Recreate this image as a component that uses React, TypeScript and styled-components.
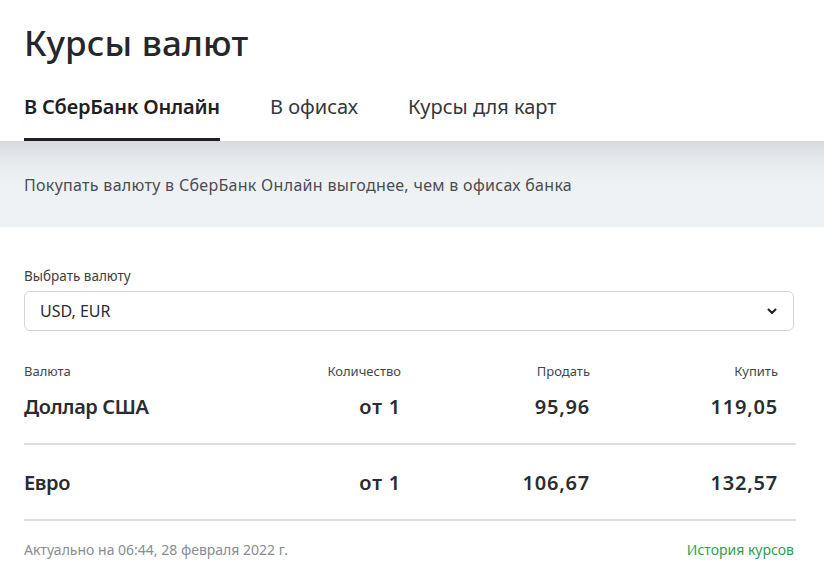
import React from 'react'
import styled, { createGlobalStyle } from 'styled-components'

const GlobalStyle = createGlobalStyle`
    html, body {
        margin: 0;
        padding: 0;
        background: #ffffff;
    }
    body {
        font-family: "Noto Sans", "Open Sans", sans-serif;
        color: #21242a;
    }
`

type Rate = {
    name: string
    amount: string
    sell: string
    buy: string
}

const rates: Rate[] = [
    { name: 'Доллар США', amount: 'от 1', sell: '95,96', buy: '119,05' },
    { name: 'Евро', amount: 'от 1', sell: '106,67', buy: '132,57' },
]

const tabs = ['В СберБанк Онлайн', 'В офисах', 'Курсы для карт']

const App: React.FC = () => {
    return (
        <Page>
            <GlobalStyle />
            <Header>
                <Title>Курсы валют</Title>
                <Tabs>
                    {tabs.map((tab, i) => (
                        <Tab key={tab} $active={i === 0}>{tab}</Tab>
                    ))}
                </Tabs>
            </Header>
            <Notice>
                <NoticeText>Покупать валюту в СберБанк Онлайн выгоднее, чем в офисах банка</NoticeText>
            </Notice>
            <Content>
                <Label>Выбрать валюту</Label>
                <Select>
                    <span>USD, EUR</span>
                    <svg width="10" height="7" viewBox="0 0 10 7" fill="none">
                        <path d="M1.5 1.5L5 5L8.5 1.5" stroke="#1f1f22" strokeWidth="2" strokeLinecap="round" strokeLinejoin="round" />
                    </svg>
                </Select>
                <Table>
                    <HeadRow>
                        <HeadCell>Валюта</HeadCell>
                        <HeadCell $right>Количество</HeadCell>
                        <HeadCell $right>Продать</HeadCell>
                        <HeadCell $right>Купить</HeadCell>
                    </HeadRow>
                    {rates.map((r, i) => (
                        <Row key={r.name} $first={i === 0}>
                            <Cell>{r.name}</Cell>
                            <Cell $num>{r.amount}</Cell>
                            <Cell $num>{r.sell}</Cell>
                            <Cell $num>{r.buy}</Cell>
                        </Row>
                    ))}
                </Table>
                <Footer>
                    <Updated>Актуально на 06:44, 28 февраля 2022 г.</Updated>
                    <HistoryLink href="#">История курсов</HistoryLink>
                </Footer>
            </Content>
        </Page>
    )
}

const Page = styled.div`
    width: 824px;
    min-height: 587px;
    background: #ffffff;
`

const Header = styled.header`
    padding: 21px 0 0 24px;
`

const Title = styled.h1`
    margin: 0;
    font-size: 35px;
    font-weight: 500;
    line-height: 44px;
    color: #25272b;
    letter-spacing: 0.2px;
`

const Tabs = styled.nav`
    display: flex;
    gap: 50px;
    margin-top: 28px;
`

const Tab = styled.div<{ $active?: boolean }>`
    font-size: 20px;
    line-height: 28px;
    padding-bottom: 17px;
    letter-spacing: ${p => (p.$active ? '-0.2px' : '0px')};
    font-weight: ${p => (p.$active ? 600 : 400)};
    color: ${p => (p.$active ? '#1f2023' : '#35373b')};
    border-bottom: 3px solid ${p => (p.$active ? '#1f2023' : 'transparent')};
`

const Notice = styled.div`
    height: 86px;
    display: flex;
    align-items: center;
    padding: 0 24px;
    background: linear-gradient(to bottom, #d7dade 0px, #e8ebee 22px, #eef1f4 40px, #eef1f4 100%);
`

const NoticeText = styled.p`
    margin: 2px 0 0;
    font-size: 16px;
    letter-spacing: 0.3px;
    color: #4b4d52;
`

const Content = styled.section`
    padding: 40px 28px 0 24px;
`

const Label = styled.div`
    font-size: 13.5px;
    line-height: 18px;
    color: #3c3e43;
    margin-bottom: 6px;
`

const Select = styled.div`
    height: 40px;
    width: 770px;
    box-sizing: border-box;
    border: 1px solid #d3d5d8;
    border-radius: 6px;
    display: flex;
    align-items: center;
    justify-content: space-between;
    padding: 0 16px 0 15px;
    font-size: 16px;
    color: #2a2c30;
`

const Table = styled.div`
    margin-top: 27px;
`

const grid = `
    display: grid;
    grid-template-columns: 1fr 150px 189px 188px;
    padding-right: 18px;
    align-items: center;
`

const HeadRow = styled.div`
    ${grid}
    height: 26px;
`

const HeadCell = styled.div<{ $right?: boolean }>`
    font-size: 13px;
    color: #45474c;
    text-align: ${p => (p.$right ? 'right' : 'left')};
`

const Row = styled.div<{ $first?: boolean }>`
    ${grid}
    box-sizing: border-box;
    padding-top: ${p => (p.$first ? '10px' : '25px')};
    padding-bottom: 23px;
    border-bottom: 2px solid #dcdde0;
`

const Cell = styled.div<{ $num?: boolean }>`
    font-size: 20px;
    line-height: 26px;
    font-weight: 600;
    letter-spacing: ${p => (p.$num ? '0.8px' : '-0.4px')};
    color: #2a2c30;
    text-align: ${p => (p.$num ? 'right' : 'left')};
`

const Footer = styled.div`
    display: flex;
    justify-content: space-between;
    align-items: center;
    padding: 19px 2px 0 0;
`

const Updated = styled.span`
    font-size: 14px;
    line-height: 20px;
    color: #8a8c90;
`

const HistoryLink = styled.a`
    font-size: 14px;
    line-height: 20px;
    color: #2e9f4f;
    text-decoration: none;
`

export default App
